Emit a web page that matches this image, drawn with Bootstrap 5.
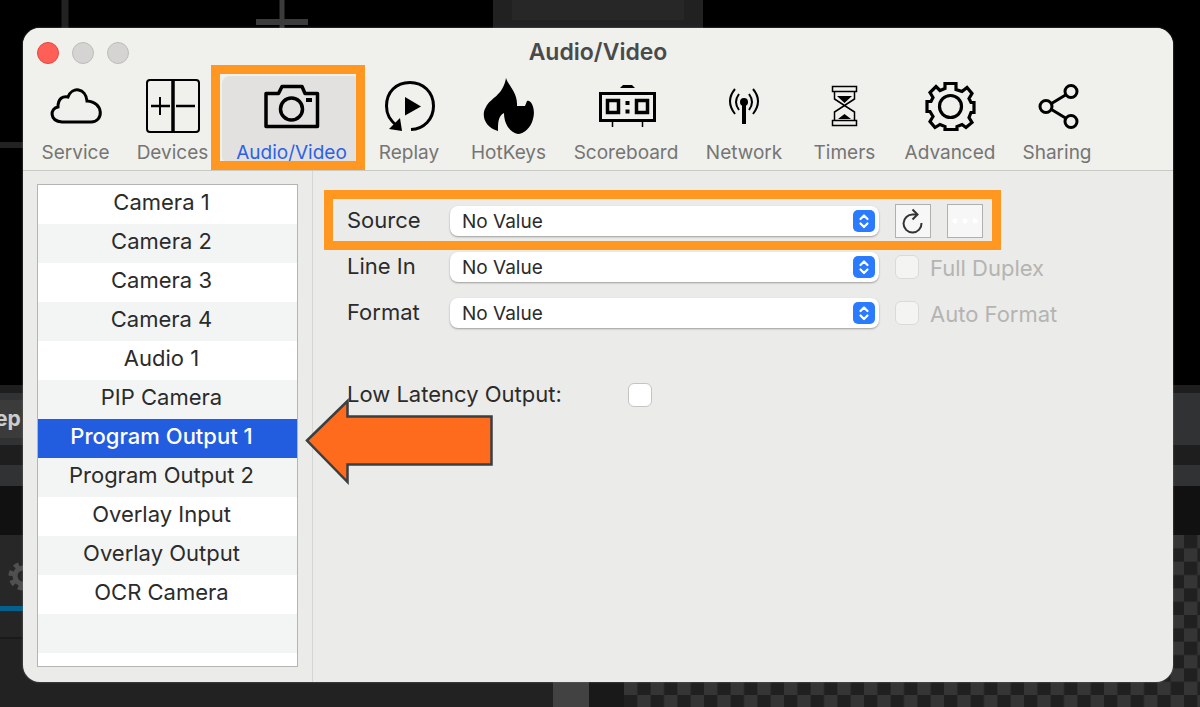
<!DOCTYPE html>
<html lang="en">
<head>
<meta charset="utf-8">
<meta name="viewport" content="width=device-width, initial-scale=1">
<title>Audio/Video</title>
<link href="https://cdn.jsdelivr.net/npm/bootstrap@5.3.0/dist/css/bootstrap.min.css" rel="stylesheet">
<style>
  body { font-family: Inter, "Liberation Sans", sans-serif; background: #000; color: #2b2b2b; padding: 28px 27px 25px 23px; }

  /* Application behind the preferences window */
  .backdrop { inset: 0; z-index: 0; }
  .stage { height: 385px; }
  .strip-top { height: 8px; background: #1e1e1e; }
  .strip-tool { height: 52px; background: #303234; }
  .strip-tool span { width: 60px; height: 38px; background: #3b3b3b; color: #ccc; font-size: 21px; text-indent: -5px; }
  .strip-gap { height: 20px; background: #1e1e1e; }
  .strip-thin { height: 21px; background: #303234; }
  .strip-dark { height: 49px; background: #111; }
  .deck { background: #222; }
  .deck-tab { height: 76px; background: #272727; border-bottom: 5px solid #04608c; }
  .deck-low { height: 28px; background: #252525; border-bottom: 2px solid #1a1a1a; }
  .deck-left { width: 553px; }
  .deck-bar { width: 36px; background: #424242; }
  .deck-space { width: 35px; background: #191919; }
  .top-panel { left: 493px; width: 210px; height: 40px; background: #212121; z-index: 0; }
  .top-panel div { width: 172px; height: 20px; background: #272727; }

  /* Window */
  .prefs { z-index: 1; background: #ebebe9; border-radius: 17px; box-shadow: 0 0 2px #777; }
  .titlebar { height: 48px; background: #f0f0ec; border-radius: 17px 17px 0 0; }
  .titlebar h1 { font-size: 23px; font-weight: 600; line-height: 48px; color: #4a4a4a; }
  .lights { left: 14px; top: 14px; gap: 13px; }
  .lights button { width: 22px; height: 22px; border-radius: 50%; border: 1px solid #bcbcba; background: #d5d4d2; padding: 0; }
  .lights .close-light { background: #ff5f57; border-color: #e2463f; }

  .tools { display: grid; grid-template-columns: 95fr 99fr 139fr 96fr 103fr 132fr 104fr 97fr 114fr 100fr 66fr; background: #f0f0ec; height: 95px; padding-left: 5px; border-bottom: 1px solid #c9c9c6; }
  .tool { background: none; border: 0; padding: 0; height: 88px; font-size: 19px; line-height: 24px; color: #757573; white-space: nowrap; border-radius: 8px; }
  .tool svg { display: block; width: 60px; height: 60px; margin: 0 auto 5px; overflow: visible; }
  .tool.chosen { background: #e2e1df; color: #2b62e6; }
  .callout::after { content: ""; position: absolute; border: 9px solid #ff9720; pointer-events: none; z-index: 3; }
  .tool.callout::after { inset: -11px -4px -6px -11px; }

  .side { width: 290px; padding: 13px 14px 15px; border-right: 1px solid #d6d6d4; }
  .sources { border: 1px solid #b4b4b2; background: repeating-linear-gradient(#fff 0 39px, #f3f5f4 39px 78px); }
  .sources button { display: block; width: 100%; height: 39px; border: 0; background: none; color: #2b2b2b; font-size: 22px; line-height: 34px; padding: 0 12px 5px 0; text-align: center; }
  .sources .picked { background: #225cdf; color: #fff; font-weight: 500; }

  .pane { padding: 27px 24px 24px 34px; font-size: 22px; line-height: 28px; }
  .pane label { padding-bottom: 2px; }
  .field-row { display: grid; grid-template-columns: 103px minmax(0, 429px) auto; height: 46px; align-items: center; width: fit-content; max-width: 100%; }
  .field-row.callout::after { inset: -8px -18px -6px -23px; }
  .after { margin-left: 16px; }
  .after label.faded { padding: 2px 0 0 11px; }
  .picker { height: 30px; width: 429px; max-width: 100%; font-size: 19px; line-height: 28px; padding: 2px 30px 0 12px; border: 0; border-radius: 8px; color: #2b2b2b; appearance: none;
    background: #fff url("data:image/svg+xml,%3Csvg xmlns='http://www.w3.org/2000/svg' viewBox='0 0 22 22'%3E%3Crect width='22' height='22' rx='5' fill='%232a7bff'/%3E%3Cpath d='M7.500 9l3.500-3.500 3.500 3.500M7.500 13.500l3.500 3.500 3.500-3.500' fill='none' stroke='%23fff' stroke-width='2.2' stroke-linecap='round' stroke-linejoin='round'/%3E%3C/svg%3E") right 4px center / 22px 22px no-repeat;
    box-shadow: 0 1px 2px #9c9c9c; }
  .square { width: 36px; height: 34px; padding: 0; border: 1px solid #b0b0af; background: #f7f7f7; color: #fff; }
  .square svg { display: block; margin: auto; }
  .tick { appearance: none; width: 24px; height: 24px; border-radius: 6px; border: 1px solid #c4c4c2; background: #fff; margin: 0; }
  .tick:disabled { background: #f4f4f2; border-color: #dadad8; }
  .faded { color: #b4b4b2; }
  .latency { margin-top: 44px; gap: 66px; }
  .arrow { left: -8px; top: 226px; z-index: 4; pointer-events: none; }
</style>
</head>
<body class="d-flex min-vh-100 position-relative">

<div class="backdrop position-absolute d-flex flex-column overflow-hidden" aria-hidden="true">
  <div class="stage position-relative flex-shrink-0">
    <svg width="400" height="200"><path d="M65 0V60" stroke="#222" stroke-width="7"/><path d="M0 145H40" stroke="#222" stroke-width="6"/><path d="M282 0V60" stroke="#3b3b3b" stroke-width="5"/><path d="M256 22H308" stroke="#3b3b3b" stroke-width="6"/></svg>
    <div class="top-panel position-absolute top-0"><div class="mx-auto"></div></div>
  </div>
  <div class="strip-top flex-shrink-0"></div>
  <div class="strip-tool flex-shrink-0 d-flex align-items-center"><span class="fw-bold d-flex align-items-center">ep</span></div>
  <div class="strip-gap flex-shrink-0"></div>
  <div class="strip-thin flex-shrink-0"></div>
  <div class="strip-dark flex-shrink-0"></div>
  <div class="deck flex-grow-1 d-flex">
    <div class="deck-left">
      <div class="deck-tab pt-4"><svg width="36" height="32" viewBox="0 0 36 32"><g fill="none" stroke="#505050"><circle cx="23" cy="17" r="8" stroke-width="5"/><circle cx="23" cy="17" r="12" stroke-width="5" stroke-dasharray="5 4.4"/></g></svg></div>
      <div class="deck-low"></div>
    </div>
    <div class="deck-bar"></div>
    <div class="deck-space"></div>
    <svg class="flex-grow-1" width="576" height="172"><defs><pattern id="checks" width="2" height="2" patternUnits="userSpaceOnUse" patternTransform="scale(13.333)"><path fill="#202020" d="M0 0h2v2H0z"/><path fill="#353535" d="M1 0h1v1H1zM0 1h1v1H0z"/></pattern></defs><rect width="100%" height="100%" fill="url(#checks)"/></svg>
  </div>
</div>

<main class="prefs position-relative flex-grow-1 d-flex flex-column">
  <header class="titlebar position-relative text-center">
    <div class="lights position-absolute d-flex">
      <button class="close-light" aria-label="Close"></button><button aria-label="Minimize"></button><button aria-label="Zoom"></button>
    </div>
    <h1 class="m-0">Audio/Video</h1>
  </header>

  <nav class="tools" aria-label="Preference sections">
    <button class="tool"><svg viewBox="0 0 60 60" fill="none" stroke="#000" stroke-width="3"><path d="M16 46C3 45 4 32 12 31C12 22 17 20 22 21C26 10 40 12 41 25C58 26 58 46 45 46Z"/></svg>Service</button>
    <button class="tool"><svg viewBox="0 0 60 60" fill="none" stroke="#000"><rect x="4" y="4" width="52" height="52" rx="3" stroke-width="2"/><path d="M30 4v53" stroke-width="3.500"/><path d="M8 30h19M33 30h19" stroke-width="2.500"/><path d="M17 21v18" stroke-width="2"/></svg>Devices</button>
    <button class="tool chosen callout position-relative"><svg viewBox="1 0 60 60" fill="none" stroke="#000" stroke-width="3.500"><path d="M5 17.500H17.500L21 10.500H41L44 17.500H56.500V50.500H5Z" stroke-linejoin="round"/><circle cx="30.500" cy="33" r="11"/><path d="M45 24h6" stroke-width="4"/></svg>Audio/Video</button>
    <button class="tool"><svg viewBox="0 0 60 60" fill="none" stroke="#000" stroke-width="3"><path d="M32 53.500C45 53 54.500 43 54.500 30C54.500 16 44 6.500 31 6.500C17 6.500 7.500 16 7.500 30C7.500 39 11 44 18 50"/><path d="M10 53L21 42L23 55Z" fill="#000" stroke="none"/><path d="M26 21L42 30.500L26 39.500Z" fill="#000" stroke="none"/></svg>Replay</button>
    <button class="tool"><svg viewBox="1 0 60 60"><path d="M28 2C30 9 40 17 39 30H47L49 25C53 23 58 33 55 43C53 52 45 58 40 58C33 57 26 49 26 37C20 40 20 47 20 55C6 51 3 38 8 31C12 22 25 20 28 2Z"/></svg>HotKeys</button>
    <button class="tool"><svg viewBox="0 0 60 60" fill="none" stroke="#000"><path d="M24 12h15l-3-3h-9z" fill="#000" stroke="none"/><rect x="4.500" y="17.500" width="54" height="27" stroke-width="3"/><rect x="11.500" y="24.500" width="11" height="12" stroke-width="3.500"/><rect x="40.500" y="24.500" width="11" height="12" stroke-width="3.500"/><path d="M29.500 27h4M29.500 35.500h4" stroke-width="4"/><path d="M16.500 45v6M46.500 45v6" stroke-width="1.500"/></svg>Scoreboard</button>
    <button class="tool"><svg viewBox="0 0 60 60" fill="none" stroke="#000" stroke-width="2"><circle cx="30" cy="26" r="4" fill="#000" stroke="none"/><path d="M30 28v20" stroke-width="4"/><path d="M25 18Q19 26 25 34M21 13Q11 25 21 38M35 18Q41 26 35 34M39 13Q49 25 39 38"/></svg>Network</button>
    <button class="tool"><svg viewBox="1 0 60 60" fill="none" stroke="#000" stroke-width="1.500"><path d="M18.500 10.500h24v5h-24zM18.500 49.500h24v-5h-24zM20.500 16v7L40.500 36v8M40.500 16v7L20.500 36v8"/><path d="M23 20h15l-7.500 7zM24 43l6.500-5l6.500 5z" fill="#000" stroke="none"/></svg>Timers</button>
    <button class="tool"><svg viewBox="0 0 60 60" fill="none" stroke="#000" stroke-width="3.200"><circle cx="30.500" cy="30.500" r="11"/><path d="M25 7.500h11v6l6 2l5-4l5 6l-3 5l2 4h3v10h-3l-2 5l3 5l-6 5l-4-3l-5 2v3h-12v-3l-5-2l-5 3l-5-6l3-5l-3-5h-3v-10h4l2-4l-3-5l6-6l4 4l5-2z"/></svg>Advanced</button>
    <button class="tool"><svg viewBox="0 0 60 60" fill="none" stroke="#000" stroke-width="3"><circle cx="19" cy="30.500" r="6"/><circle cx="44" cy="15.500" r="6"/><circle cx="44" cy="45.500" r="6"/><path d="M24.500 27.500L38.500 19M24.500 33.500L38.500 42"/></svg>Sharing</button>
  </nav>

  <div class="d-flex flex-grow-1">
    <aside class="side d-flex flex-shrink-0">
      <div class="sources flex-grow-1">
        <button>Camera 1</button>
        <button>Camera 2</button>
        <button>Camera 3</button>
        <button>Camera 4</button>
        <button>Audio 1</button>
        <button>PIP Camera</button>
        <button class="picked">Program Output 1</button>
        <button>Program Output 2</button>
        <button>Overlay Input</button>
        <button>Overlay Output</button>
        <button>OCR Camera</button>
      </div>
    </aside>

    <section class="pane position-relative flex-grow-1">
      <div class="field-row callout position-relative">
        <label for="source">Source</label>
        <select id="source" class="picker"><option>No Value</option></select>
        <div class="after d-flex">
          <button class="square" aria-label="Reload"><svg width="30" height="30" viewBox="1 0 30 30" fill="none" stroke="#333" stroke-width="2"><path d="M20 8.500H16A9 9 0 1 0 24.500 17"/><path d="M15.500 3.500L20.500 8.500L15.500 13.500"/></svg></button>
          <button class="square ms-3" aria-label="More"><svg width="30" height="6" viewBox="0 0 30 6" fill="#fff"><circle cx="5" cy="3" r="2.500"/><circle cx="15" cy="3" r="2.500"/><circle cx="25" cy="3" r="2.500"/></svg></button>
        </div>
      </div>
      <div class="field-row">
        <label for="linein">Line In</label>
        <select id="linein" class="picker"><option>No Value</option></select>
        <div class="after d-flex align-items-center"><input class="tick" type="checkbox" id="duplex" disabled><label class="faded" for="duplex">Full Duplex</label></div>
      </div>
      <div class="field-row">
        <label for="format">Format</label>
        <select id="format" class="picker"><option>No Value</option></select>
        <div class="after d-flex align-items-center"><input class="tick" type="checkbox" id="auto" disabled><label class="faded" for="auto">Auto Format</label></div>
      </div>
      <div class="latency d-flex align-items-center"><label for="low">Low Latency Output:</label><input class="tick" type="checkbox" id="low"></div>
      <svg class="arrow position-absolute" width="190" height="90" viewBox="0 0 190 90" aria-hidden="true"><path d="M2 43.500L42.500 4V19.500H186.500V67.500H42.500V85Z" fill="#ff6b1c" stroke="#3a3f42" stroke-width="2.500"/></svg>
    </section>
  </div>
</main>

<script src="https://cdn.jsdelivr.net/npm/bootstrap@5.3.0/dist/js/bootstrap.bundle.min.js"></script>
</body>
</html>
